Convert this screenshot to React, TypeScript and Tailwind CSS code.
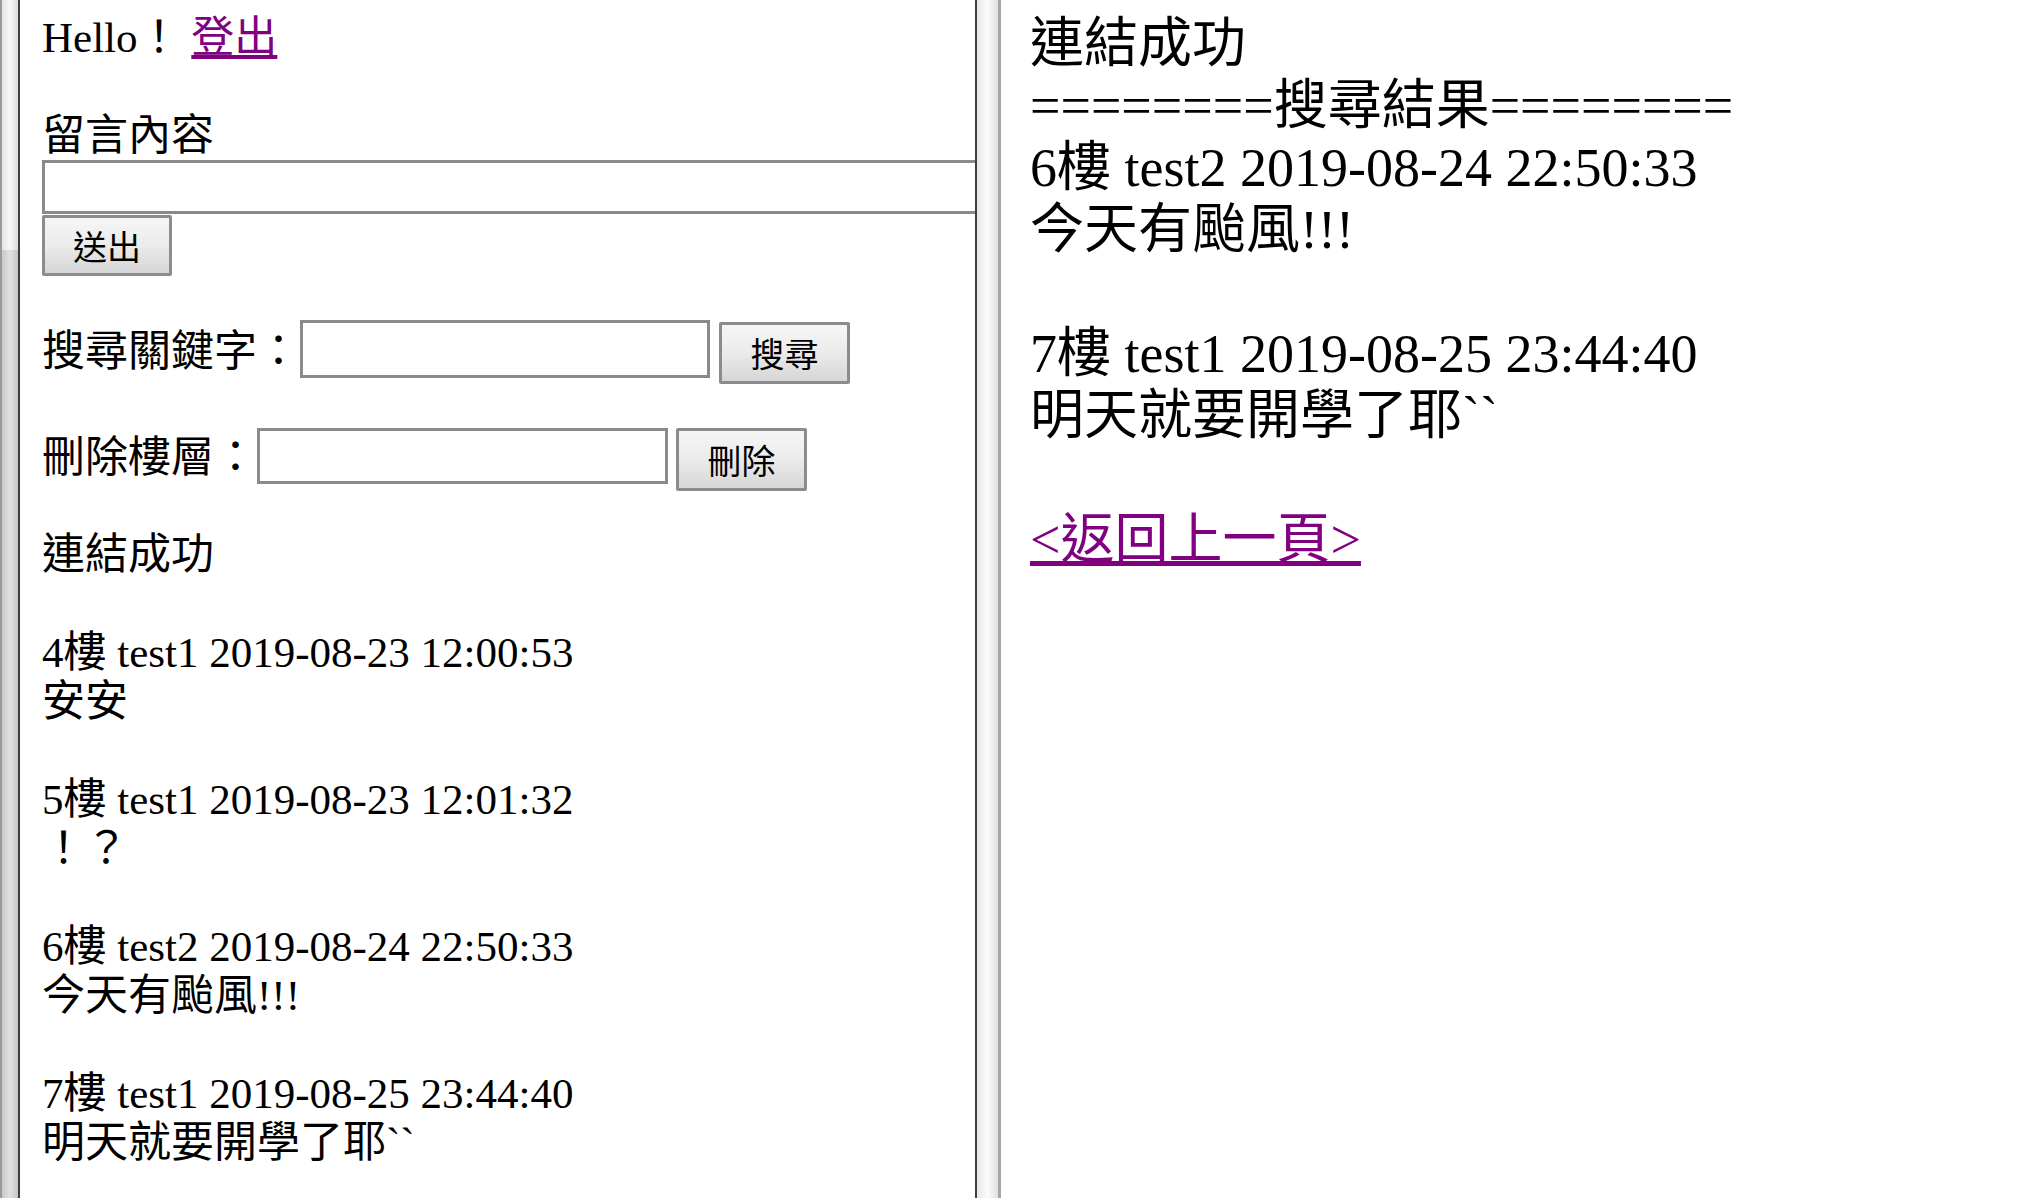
import React from "react";

const serif = "font-['Liberation_Serif','Noto_Sans_CJK_TC',serif]";

function Btn({ label, className }: { label: string; className: string }) {
  return (
    <button
      type="button"
      className={`flex shrink-0 items-center justify-center rounded-[2px] border-[3px] border-[#8c8c8c] bg-gradient-to-b from-[#f6f6f6] via-[#ebebeb] to-[#d6d6d6] text-[34px] leading-none text-black font-['Noto_Sans_CJK_TC','Liberation_Sans',sans-serif] ${className}`}
    >
      {label}
    </button>
  );
}

const leftEntries = [
  { head: "4樓 test1 2019-08-23 12:00:53", body: "安安" },
  { head: "5樓 test1 2019-08-23 12:01:32", body: "！？" },
  { head: "6樓 test2 2019-08-24 22:50:33", body: "今天有颱風!!!" },
  { head: "7樓 test1 2019-08-25 23:44:40", body: "明天就要開學了耶``" },
];

export default function App() {
  return (
    <div className={`flex h-[1198px] w-[2027px] overflow-hidden bg-white text-black ${serif}`}>
      {/* left edge strip */}
      <div className="flex h-full w-[18px] shrink-0 flex-col border-l-2 border-[#9a9a9a]">
        <div className="h-[250px] bg-gradient-to-r from-[#e4e4e4] via-[#f7f7f7] to-[#dadada]" />
        <div className="flex-1 bg-gradient-to-r from-[#c9c9c9] via-[#e2e2e2] to-[#c6c6c6]" />
      </div>

      {/* left panel */}
      <div className="h-full w-[959px] shrink-0 overflow-hidden border-x-2 border-[#3e3e3e] pl-[22px] pt-[13px] text-[43px] leading-[49px]">
        <div className="h-[49px] whitespace-nowrap">
          Hello！ <a href="#" className="text-[#800080] underline">登出</a>
        </div>
        <div className="h-[49px]" />
        <div className="h-[49px] whitespace-nowrap">留言內容</div>
        <div className="h-[54px] w-[1000px] border-[3px] border-[#8a8a8a] bg-white" />
        <Btn label="送出" className="mt-[1px] h-[61px] w-[130px]" />

        <div className="mt-[44px] flex h-[64px] items-start">
          <div className="mt-[7px] h-[49px] w-[258px] whitespace-nowrap">搜尋關鍵字：</div>
          <div className="h-[58px] w-[410px] shrink-0 border-[3px] border-[#8a8a8a] bg-white" />
          <Btn label="搜尋" className="ml-[9px] mt-[2px] h-[62px] w-[131px]" />
        </div>

        <div className="mt-[44px] flex h-[63px] items-start">
          <div className="mt-[5px] h-[49px] w-[215px] whitespace-nowrap">刪除樓層：</div>
          <div className="h-[56px] w-[411px] shrink-0 border-[3px] border-[#8a8a8a] bg-white" />
          <Btn label="刪除" className="ml-[8px] h-[63px] w-[131px]" />
        </div>

        <div className="mt-[39px] h-[49px] whitespace-nowrap">連結成功</div>
        <div className="h-[49px]" />
        {leftEntries.map((e) => (
          <div key={e.head}>
            <div className="h-[49px] whitespace-nowrap">{e.head}</div>
            <div className="h-[49px] whitespace-nowrap">{e.body}</div>
            <div className="h-[49px]" />
          </div>
        ))}
      </div>

      {/* splitter */}
      <div className="h-full w-[21px] shrink-0 bg-gradient-to-r from-[#e6e6e6] via-[#fbfbfb] to-[#e0e0e0]" />
      <div className="h-full w-[3px] shrink-0 bg-[#a6a6a6]" />

      {/* right panel */}
      <div className="h-full flex-1 pl-[29px] pt-[13px] text-[54px] leading-[62px]">
        <div className="h-[62px] whitespace-nowrap">連結成功</div>
        <div className="h-[62px] whitespace-nowrap">========搜尋結果========</div>
        <div className="h-[62px] whitespace-nowrap">6樓 test2 2019-08-24 22:50:33</div>
        <div className="h-[62px] whitespace-nowrap">今天有颱風!!!</div>
        <div className="h-[62px]" />
        <div className="h-[62px] whitespace-nowrap">7樓 test1 2019-08-25 23:44:40</div>
        <div className="h-[62px] whitespace-nowrap">明天就要開學了耶``</div>
        <div className="h-[62px]" />
        <div className="h-[62px] whitespace-nowrap">
          <a href="#" className="text-[#800080] underline">&lt;返回上一頁&gt;</a>
        </div>
      </div>
    </div>
  );
}
